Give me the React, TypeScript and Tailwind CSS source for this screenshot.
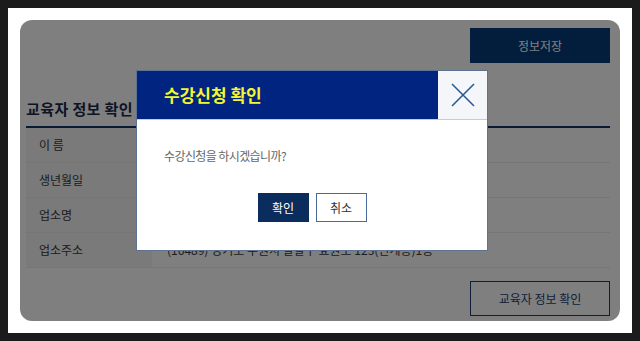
const rows = [
  { label: '이 름', value: '' },
  { label: '생년월일', value: '' },
  { label: '업소명', value: '' },
  { label: '업소주소', value: '(16489) 경기도 수원시 팔달구 효원로 123(인계동)1층' },
];

const App = () => {
  return (
    <div className="h-[341px] w-[640px] bg-[#1b1b1b] p-2 font-['Noto_Sans_CJK_KR',sans-serif]">
      <div className="h-full w-full bg-white p-3">
        <div className="relative h-full overflow-hidden rounded-[12px] bg-white pl-[6px] pr-[10px] pt-[8px]">
          {/* Page content */}
          <div className="flex justify-end">
            <button className="h-[35px] w-[140px] bg-[#063a7a] text-[12px] text-white">정보저장</button>
          </div>

          <h2 className="mt-[36px] border-b-2 border-[#14336a] pb-[7px] text-[15px] font-bold leading-[20px] tracking-[0.4px] text-[#1b2a4a]">
            교육자 정보 확인
          </h2>
          <div>
            {rows.map((row) => (
              <div key={row.label} className="flex h-[35px] border-b border-[#ececec]">
                <div className="flex w-[126px] items-center bg-[#f5f5f5] pl-[13px] text-[12px] text-[#3a3a3a]">
                  {row.label}
                </div>
                <div className="flex flex-1 items-center pl-[15px] text-[12px] text-[#3a3a3a]">{row.value}</div>
              </div>
            ))}
          </div>

          <div className="mt-[13px] flex justify-end">
            <button className="h-[35px] w-[140px] border border-[#1e3f73] text-[12px] text-[#1e3f73]">
              교육자 정보 확인
            </button>
          </div>

          {/* Overlay */}
          <div className="absolute inset-0 bg-black/50" />

          {/* Confirm modal */}
          <div className="absolute left-[116px] top-[50px] flex h-[181px] w-[352px] flex-col border border-[#5d7390] bg-white">
            <div className="flex h-[49px] border-b border-[#c3cedd]">
              <div className="flex flex-1 items-center bg-[#00247f] pl-[27px] text-[17px] font-bold text-[#f6f62e]">
                수강신청 확인
              </div>
              <div className="flex w-[49px] items-center justify-center bg-[#f4f6f9]">
                <svg width="24" height="24" viewBox="0 0 24 24" fill="none" stroke="#2c5a91" strokeWidth="1.6">
                  <path d="M1 1L23 23M23 1L1 23" />
                </svg>
              </div>
            </div>
            <div className="pl-[27px] pt-[28px] text-[12px] leading-[16px] tracking-[-0.6px] text-[#666]">
              수강신청을 하시겠습니까?
            </div>
            <div className="mt-[29px] flex justify-center gap-[7px]">
              <button className="h-[29px] w-[51px] bg-[#0a2d5e] text-[12px] text-white">확인</button>
              <button className="h-[29px] w-[51px] border border-[#4a6a9a] bg-white text-[12px] text-[#333]">
                취소
              </button>
            </div>
          </div>
        </div>
      </div>
    </div>
  );
};

export default App;
